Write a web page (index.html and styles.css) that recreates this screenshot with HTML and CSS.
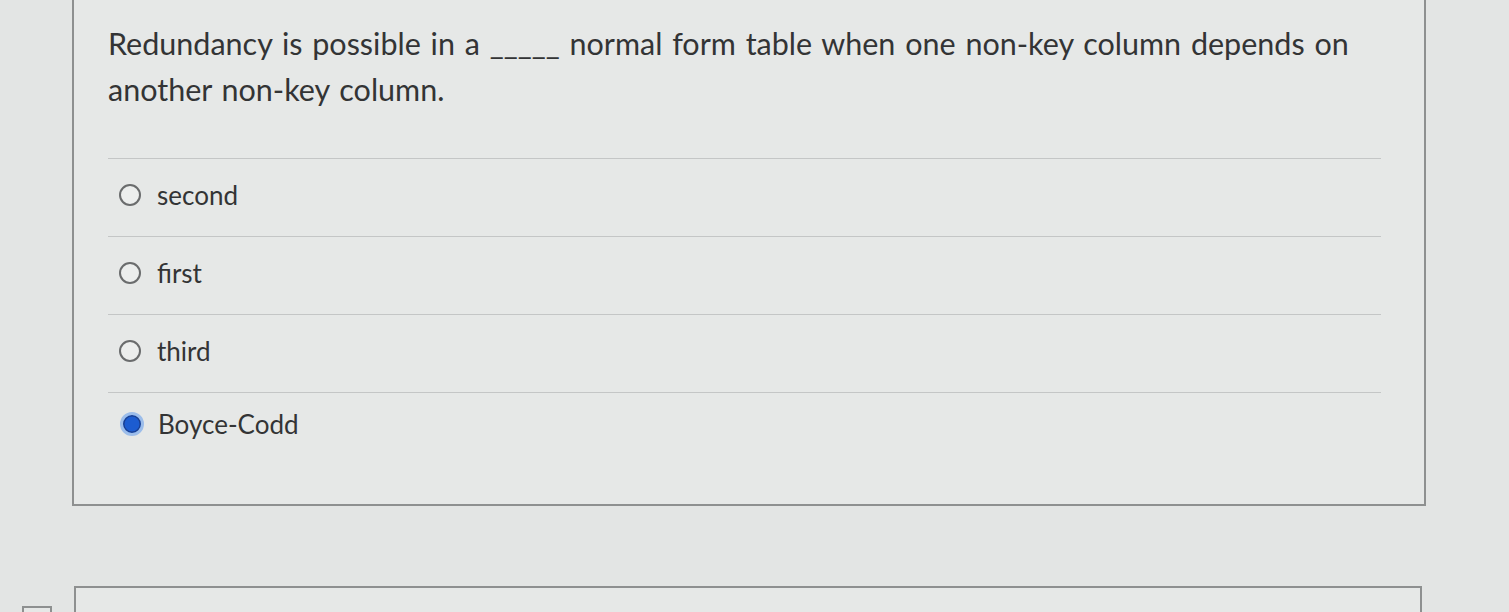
FILE: index.html
```html
<!DOCTYPE html>
<html>
<head>
<meta charset="utf-8">
<link rel="stylesheet" href="styles.css">
</head>
<body>
<div class="page">
  <section class="card">
    <p class="question">Redundancy is possible in a _____ normal form table when one non-key column depends on another non-key column.</p>
    <div class="options">
      <label class="option"><span class="radio"></span><span class="label">second</span></label>
      <label class="option"><span class="radio"></span><span class="label">first</span></label>
      <label class="option"><span class="radio"></span><span class="label">third</span></label>
      <label class="option"><span class="radio checked"></span><span class="label">Boyce-Codd</span></label>
    </div>
  </section>
  <div class="next-row">
    <span class="flag"></span>
    <section class="card next"></section>
  </div>
</div>
</body>
</html>
```
FILE: styles.css
```css
html, body {
  margin: 0;
  padding: 0;
  background: #e3e5e4;
}
.page {
  font-family: Lato, "Open Sans", sans-serif;
  color: #333435;
  display: flex;
  flex-direction: column;
  height: 612px;
  overflow: hidden;
}
.card {
  margin-left: 72px;
  width: 1354px;
  box-sizing: border-box;
  border: 2px solid #8e9090;
  background: #e6e8e7;
}
.card:first-child {
  margin-top: -4px;
  padding: 22px 43px 34px 34px;
  flex: none;
}
.question {
  margin: 0 0 46px 0;
  font-size: 30.5px;
  word-spacing: 2px;
  line-height: 46px;
}
.options {
  display: flex;
  flex-direction: column;
}
.option {
  display: flex;
  align-items: center;
  gap: 16px;
  height: 78px;
  border-top: 1.5px solid #c4c6c6;
  padding-left: 11px;
  box-sizing: border-box;
  padding-bottom: 5px;
}
.option:last-child {
  padding-bottom: 16px;
}
.radio {
  width: 22px;
  height: 22px;
  box-sizing: border-box;
  border: 2.5px solid #6a6c6d;
  border-radius: 50%;
  background: #eceeed;
  flex: none;
}
.radio.checked {
  width: 24px;
  height: 24px;
  margin-left: 1px;
  margin-right: -2px;
  border: 3px solid #9cbdea;
  background: #1c5cd0;
  box-shadow: inset 0 0 0 1.5px #1a3f90;
}
.label {
  font-size: 26px;
  line-height: 32px;
}
.next-row {
  display: flex;
  align-items: flex-start;
  margin-top: 80px;
  padding-left: 22px;
  flex: none;
}
.flag {
  width: 26px;
  height: 20px;
  margin-top: 20px;
  border: 2px solid #8e9090;
  background: #e6e8e7;
  flex: none;
}
.next-row .card {
  margin-left: 22px;
  height: 30px;
  width: 1348px;
}
```
